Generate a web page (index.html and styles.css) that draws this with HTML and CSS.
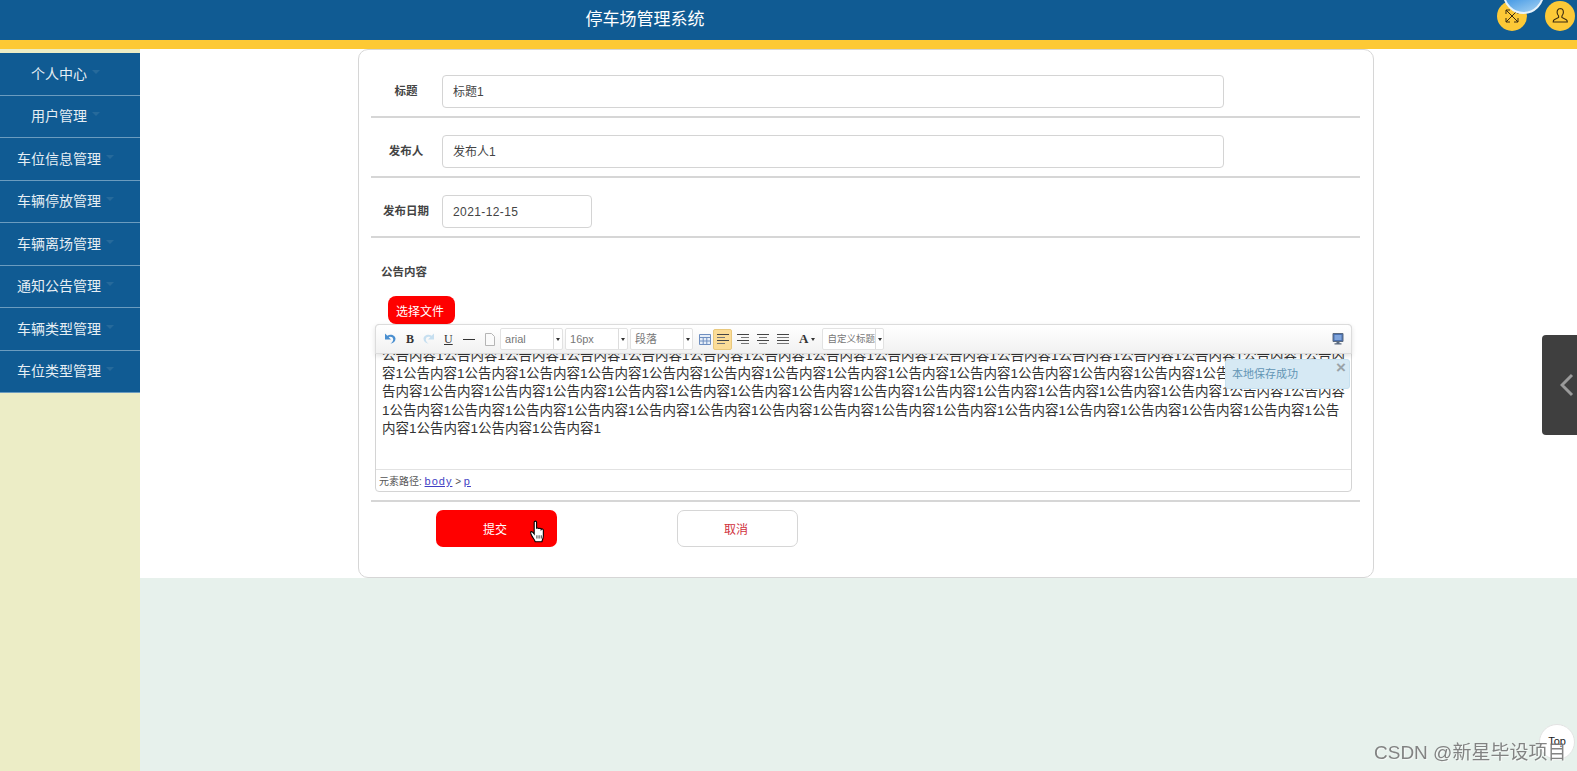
FILE: index.html
```html
<!DOCTYPE html>
<html lang="zh-CN">
<head>
    <meta charset="UTF-8">
    <title>停车场管理系统</title>
    <link rel="stylesheet" href="styles.css">
</head>
<body>
    <header class="topbar">
        <div class="topbar-title">停车场管理系统</div>
        <div class="topbar-actions">
            <span class="round-btn">
                <svg width="18" height="18" viewBox="0 0 18 18" fill="none" stroke="#3a2a10" stroke-width="1">
                    <path d="M3 3l12 12M15 3L3 15"/>
                    <path d="M3 7V3h4M11 3h4v4M15 11v4h-4M7 15H3v-4"/>
                </svg>
            </span>
            <span class="round-btn">
                <svg width="20" height="20" viewBox="0 0 20 20" fill="none" stroke="#3a2a10" stroke-width="1.1">
                    <path d="M10 2.5c2.2 0 3.4 1.6 3.4 3.7 0 1.6-.7 2.9-1.5 3.8v1.5l4.4 2.2c.8.4 1 1 1 2.3H3.2c0-1.3.2-1.9 1-2.3l4.4-2.2V10c-.8-.9-1.5-2.2-1.5-3.8 0-2.1 1.2-3.7 3.4-3.7z"/>
                </svg>
            </span>
        </div>
        <div class="topbar-bubble"></div>
    </header>
    <div class="topbar-stripe"></div>

    <div class="layout">
        <!-- 左侧菜单 -->
        <nav class="sidebar">
            <div class="menu-item">个人中心<i class="caret"></i></div>
            <div class="menu-item">用户管理<i class="caret"></i></div>
            <div class="menu-item">车位信息管理<i class="caret"></i></div>
            <div class="menu-item">车辆停放管理<i class="caret"></i></div>
            <div class="menu-item">车辆离场管理<i class="caret"></i></div>
            <div class="menu-item">通知公告管理<i class="caret"></i></div>
            <div class="menu-item">车辆类型管理<i class="caret"></i></div>
            <div class="menu-item">车位类型管理<i class="caret"></i></div>
        </nav>

        <main class="main">
            <div class="main-white">
                <div class="card">
                    <div class="form-row">
                        <label class="form-label">标题</label>
                        <div class="input">标题1</div>
                    </div>
                    <div class="form-row">
                        <label class="form-label">发布人</label>
                        <div class="input">发布人1</div>
                    </div>
                    <div class="form-row">
                        <label class="form-label">发布日期</label>
                        <div class="input input-date">2021-12-15</div>
                    </div>

                    <!-- 公告内容 -->
                    <div class="content-row">
                        <div class="content-label">公告内容</div>
                        <button class="upload-btn">选择文件</button>
                        <div class="editor">
                            <div class="toolbar">
                                <svg class="tool" width="12" height="12" viewBox="0 0 12 12"><path d="M1 .5v6h6L4.700 4.300C6.500 3.300 9 4 9.200 6.300 9.300 8 8 9.500 6.500 10.800 9.500 10.300 11.500 8.300 11.500 5.800 11.500 2.500 7 .5 3.300 2.700z" fill="#4a8fd0"/></svg>
                                <b class="tool tool-b">B</b>
                                <svg class="tool tool-redo" width="12" height="12" viewBox="0 0 12 12"><path d="M11 .5v6H5l2.300-2.200C5.500 3.300 3 4 2.800 6.300 2.700 8 4 9.500 5.500 10.800 2.500 10.300.5 8.300.5 5.800.5 2.500 5 .5 8.700 2.700z" fill="#c6dff0"/></svg>
                                <span class="tool tool-u">U</span>
                                <span class="tool tool-hr"></span>
                                <svg class="tool tool-doc" width="12" height="13" viewBox="0 0 12 13" fill="#fafafa" stroke="#b5b5b5"><path d="M1.500.5h6l3 3v9h-9z"/></svg>
                                <span class="combo combo-font"><span class="combo-text">arial</span><span class="combo-arrow"></span></span>
                                <span class="combo combo-size"><span class="combo-text">16px</span><span class="combo-arrow"></span></span>
                                <span class="combo combo-para"><span class="combo-text">段落</span><span class="combo-arrow"></span></span>
                                <svg class="tool tool-table" width="12" height="11" viewBox="0 0 12 11" fill="#e6eef8" stroke="#6f8fc0" stroke-width="1"><path d="M.5.5h11v10H.500zM.5 3.500h11M.5 7h11M4.200 3.500v7M7.800 3.500v7"/></svg>
                                <span class="align-btn align-active"><i class="bars bars-left"></i></span>
                                <span class="align-btn"><i class="bars bars-right"></i></span>
                                <span class="align-btn"><i class="bars bars-center"></i></span>
                                <span class="align-btn"><i class="bars bars-full"></i></span>
                                <span class="tool tool-a">A</span><span class="tool-a-arrow"></span>
                                <span class="combo combo-title"><span class="combo-text">自定义标题</span><span class="combo-arrow"></span></span>
                                <svg class="tool-screen" width="12" height="12" viewBox="0 0 12 12"><path d="M1 .5h10v8H1z" fill="#4a70b0" stroke="#5a6a80"/><path d="M2.500 2h7v5h-7z" fill="#7fa4dc"/><path d="M4.500 9h3v1.300h2V11.500h-7v-1.200h2z" fill="#5a6a80"/></svg>
                            </div>
                            <div class="editor-body">
                                <p>公告内容1公告内容1公告内容1公告内容1公告内容1公告内容1公告内容1公告内容1公告内容1公告内容1公告内容1公告内容1公告内容1公告内容1公告内容1公告内容1公告内容1公告内容1公告内容1公告内容1公告内容1公告内容1公告内容1公告内容1公告内容1公告内容1公告内容1公告内容1公告内容1公告内容1公告内容1公告内容1公告内容1公告内容1公告内容1公告内容1公告内容1公告内容1公告内容1公告内容1公告内容1公告内容1公告内容1公告内容1公告内容1公告内容1公告内容1公告内容1公告内容1公告内容1公告内容1公告内容1公告内容1公告内容1公告内容1公告内容1公告内容1公告内容1公告内容1公告内容1公告内容1公告内容1公告内容1公告内容1公告内容1公告内容1</p>
                            </div>
                            <div class="editor-status">元素路径: <a href="#">body</a> &gt; <a href="#">p</a></div>
                            <div class="toast">本地保存成功<span class="toast-close">×</span></div>
                        </div>
                    </div>

                    <div class="actions">
                        <button class="btn btn-submit">提交
                            <svg class="hand" width="18" height="24" viewBox="0 0 16 22"><path d="M4.500 2c0-1.300 2.200-1.300 2.200 0v6c.2-1 2-1 2.100.2.300-1 2-.8 2.100.4.400-.8 2-.5 2 .8v5.100c0 2.500-1 3.500-1.300 5.500H5.500c-.6-2-2-3.200-3.300-5.800-.8-1.500-1.400-2.900-.6-3.400.8-.5 1.800.3 2.900 2z" fill="#fff" stroke="#000" stroke-width="1"/><path d="M7 14v3M9 14v3M11 14v3" stroke="#000" stroke-width=".7"/></svg>
                        </button>
                        <button class="btn btn-cancel">取消</button>
                    </div>
                </div>
            </div>
        </main>
    </div>

    <!-- 浮动元素 -->
    <div class="side-tab">
        <svg width="14" height="24" viewBox="0 0 14 24" fill="none" stroke="#9a9a9a" stroke-width="3"><path d="M12 2L2 12l10 10"/></svg>
    </div>
    <div class="back-top">Top</div>
    <div class="watermark">CSDN @新星毕设项目</div>
</body>
</html>
```

FILE: styles.css
```css
* {
    box-sizing: border-box;
}
html, body {
    height: 100%;
}
body {
    margin: 0;
    overflow: hidden;
    display: flex;
    flex-direction: column;
    font-family: "Liberation Sans", "Noto Sans CJK SC", sans-serif;
    font-size: 12px;
    color: #444;
    background-color: #e7f1ec;
}

/* 顶部 */
.topbar {
    position: relative;
    height: 40px;
    flex: none;
    background-color: #105b93;
    overflow: hidden;
}
.topbar-title {
    width: 1290px;
    text-align: center;
    font-size: 17px;
    line-height: 39px;
    color: #fff;
}
.topbar-bubble {
    position: absolute;
    left: 1503px;
    top: -27px;
    width: 41px;
    height: 41px;
    border-radius: 50%;
    border: 2px solid #e6f2fb;
    background: linear-gradient(160deg, #4f9fe6 55%, #a9d4f3 100%);
}
.topbar-actions {
    position: absolute;
    left: 1497px;
    top: 1px;
    display: flex;
    gap: 18px;
}
.round-btn {
    width: 30px;
    height: 30px;
    border-radius: 50%;
    background-color: #fcc937;
    display: flex;
    align-items: center;
    justify-content: center;
}
.topbar-stripe {
    height: 9px;
    flex: none;
    background-color: #fdc935;
}

.layout {
    flex: 1;
    display: flex;
    min-height: 0;
}

/* 左侧菜单 */
.sidebar {
    width: 140px;
    flex: none;
    padding-top: 4px;
    background-color: #ecedc6;
}
.menu-item {
    height: 42.500px;
    padding: 0 9px 2px 0;
    display: flex;
    align-items: center;
    justify-content: center;
    font-size: 14px;
    color: #e6eef4;
    background-color: #105b93;
    border-bottom: 1px solid #6b9cbf;
}
.caret {
    margin-left: 5px;
    margin-bottom: 2px;
    border-left: 4px solid transparent;
    border-right: 4px solid transparent;
    border-top: 4px solid #266a9b;
}

.main {
    flex: 1;
    min-width: 0;
}
.main-white {
    background-color: #fff;
    padding-left: 218px;
}

/* 表单卡片 */
.card {
    width: 1016px;
    height: 529px;
    padding: 8px 13px 0 12px;
    background-color: #fff;
    border: 1px solid #d6d6d6;
    border-radius: 10px;
}
.form-row {
    height: 60px;
    padding: 17px 0 8px;
    display: flex;
    border-bottom: 2px solid #d6d6d6;
}
.form-label {
    width: 71px;
    padding-right: 1px;
    flex: none;
    text-align: center;
    line-height: 33px;
    font-size: 11.500px;
    font-weight: bold;
}
.input {
    width: 782px;
    height: 33px;
    padding: 0 10px;
    line-height: 33px;
    border: 1px solid #d4d4d4;
    border-radius: 4px;
}
.input-date {
    width: 150px;
    letter-spacing: .4px;
}

.content-row {
    padding-left: 4px;
    height: 264px;
    border-bottom: 2px solid #d6d6d6;
}
.content-label {
    padding: 26px 0 0 6px;
    height: 58px;
    line-height: 16px;
    font-size: 11.500px;
    font-weight: bold;
}
.upload-btn {
    display: block;
    width: 67px;
    height: 28px;
    margin-left: 13px;
    padding: 0 3px 0 0;
    border: none;
    border-radius: 8px;
    background-color: #f00;
    color: #fff;
    font: inherit;
}

/* 编辑器 */
.editor {
    position: relative;
    width: 977px;
    height: 168px;
    display: flex;
    flex-direction: column;
    border: 1px solid #d4d4d4;
    border-radius: 4px;
    background-color: #fff;
}
.toolbar {
    position: relative;
    z-index: 1;
    height: 30px;
    flex: none;
    margin: -1px -1px 0;
    padding: 0 8px;
    display: flex;
    align-items: center;
    background: linear-gradient(#fff, #f1f1f1);
    border: 1px solid #dcdcdc;
    border-radius: 4px 4px 0 0;
    box-shadow: 0 2px 5px rgba(0,0,0,.12);
}
.tool {
    flex: none;
    margin-right: 9px;
}
.tool-b {
    margin-left: 1px;
    margin-right: 9px;
    font: bold 12px "Liberation Serif", serif;
    color: #333;
}
.tool-u {
    width: 10px;
    margin-right: 9px;
    font: 12px "Liberation Serif", serif;
    color: #333;
    text-decoration: underline;
}
.tool-hr {
    width: 12px;
    height: 1px;
    background-color: #333;
}
.tool-doc {
    margin-right: 4px;
}
.combo {
    flex: none;
    height: 22px;
    margin-right: 2px;
    display: flex;
    font-size: 11px;
    background-color: #fff;
    border: 1px solid #e2e2e2;
    border-radius: 2px;
    color: #777;
}
.combo-font,
.combo-size,
.combo-para {
    width: 63px;
}
.combo-title {
    width: 62px;
    margin-left: 7px;
    font-size: 9.500px;
}
.combo-text {
    flex: 1;
    padding-left: 4px;
    line-height: 20px;
    white-space: nowrap;
    border-right: 1px solid #ddd;
}
.combo-arrow {
    width: 8px;
    flex: none;
    position: relative;
}
.combo-arrow::after {
    content: "";
    position: absolute;
    left: 2px;
    top: 9px;
    border-left: 2.500px solid transparent;
    border-right: 2.500px solid transparent;
    border-top: 3px solid #333;
}
.tool-table {
    margin: 0 2px 0 4px;
}
.align-btn {
    flex: none;
    width: 19px;
    height: 21px;
    margin-right: 1px;
    display: flex;
    align-items: center;
    justify-content: center;
    border: 1px solid transparent;
    border-radius: 2px;
}
.align-active {
    background-color: #fbdc97;
    border-color: #e9c87c;
}
.bars {
    display: block;
    width: 12px;
    height: 10px;
    background-repeat: no-repeat;
    background-image: linear-gradient(#444, #444), linear-gradient(#777, #777), linear-gradient(#444, #444), linear-gradient(#777, #777);
    background-position: 0 0, 0 3px, 0 6px, 0 9px;
}
.bars-left {
    background-size: 12px 1px, 8px 1px, 12px 1px, 8px 1px;
}
.bars-right {
    background-size: 12px 1px, 8px 1px, 12px 1px, 8px 1px;
    background-position: 0 0, 4px 3px, 0 6px, 4px 9px;
}
.bars-center {
    background-size: 12px 1px, 8px 1px, 12px 1px, 8px 1px;
    background-position: 0 0, 2px 3px, 0 6px, 2px 9px;
}
.bars-full {
    background-size: 12px 1px, 12px 1px, 12px 1px, 12px 1px;
}
.tool-a {
    margin: 0 3px 0 6px;
    font: bold 13px "Liberation Serif", serif;
    color: #333;
}
.tool-a-arrow {
    flex: none;
    border-left: 2.500px solid transparent;
    border-right: 2.500px solid transparent;
    border-top: 3px solid #333;
}
.tool-screen {
    margin-left: auto;
    margin-right: -1px;
}
.editor-body {
    flex: 1;
    overflow: hidden;
    padding: 0 6px;
}
.editor-body p {
    width: 965px;
    margin: -7px 0 0;
    font-size: 13.500px;
    line-height: 18.200px;
    color: #333;
}
.editor-status {
    height: 22px;
    flex: none;
    padding-left: 3px;
    line-height: 22px;
    font-size: 10px;
    color: #555;
    border-top: 1px solid #e2e2e2;
}
.editor-status a {
    font-size: 11px;
    color: #3f3fc4;
    letter-spacing: 1px;
}
.toast {
    position: absolute;
    left: 849px;
    top: 34px;
    width: 125px;
    height: 30px;
    z-index: 2;
    padding-left: 6px;
    line-height: 28px;
    font-size: 11px;
    color: #6395b5;
    background-color: #d6e9f4;
    border: 1px solid #c7e1f0;
    border-radius: 3px;
}
.toast-close {
    position: absolute;
    right: 3px;
    top: -1px;
    line-height: 18px;
    font-size: 17px;
    font-weight: bold;
    color: #9aa3a8;
}

/* 按钮 */
.actions {
    padding: 8px 0 0 65px;
    display: flex;
    gap: 120px;
}
.btn {
    position: relative;
    width: 121px;
    height: 37px;
    padding: 0 3px 0 0;
    border-radius: 7px;
    font: inherit;
}
.btn-submit {
    border: none;
    background-color: #f00;
    color: #fff;
}
.btn-cancel {
    background-color: #fff;
    border: 1px solid #d6d6d6;
    color: #d0303c;
}
.hand {
    position: absolute;
    left: 93px;
    top: 10px;
}

/* 浮动元素 */
.side-tab {
    position: fixed;
    left: 1542px;
    top: 335px;
    width: 35px;
    height: 100px;
    padding-left: 18px;
    display: flex;
    align-items: center;
    background-color: #3f3f3f;
    border-radius: 4px 0 0 4px;
}
.back-top {
    position: fixed;
    left: 1539px;
    top: 724px;
    width: 36px;
    height: 36px;
    text-align: center;
    line-height: 32px;
    font-size: 11px;
    color: #222;
    background-color: #fff;
    border: 1px solid #e2e2e2;
    border-radius: 50%;
}
.watermark {
    position: fixed;
    left: 1374px;
    top: 740px;
    font-size: 19px;
    line-height: 26px;
    white-space: nowrap;
    color: rgba(110, 110, 110, .85);
    text-shadow: 1px 1px 1px rgba(255, 255, 255, .7);
}
```
